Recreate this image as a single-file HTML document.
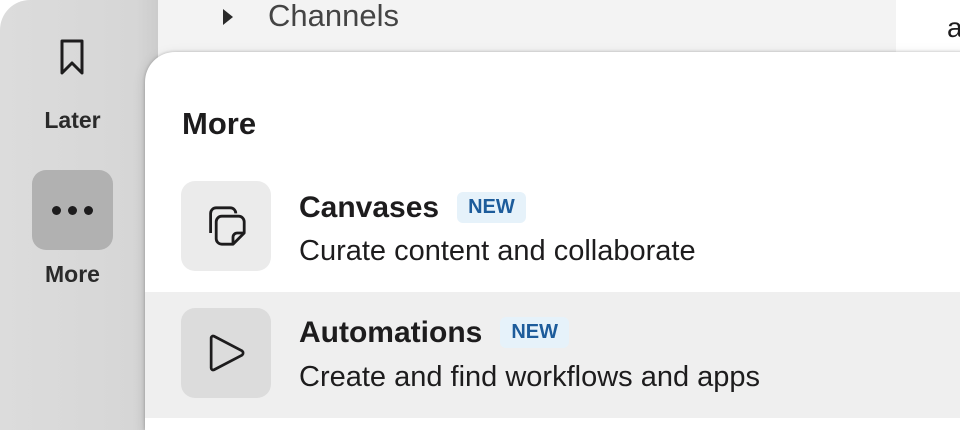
<!DOCTYPE html>
<html><head><style>
*{margin:0;padding:0;box-sizing:border-box}
html,body{width:960px;height:430px;overflow:hidden}
body{background:#fff;font-family:"Liberation Sans",sans-serif;position:relative;color:#1d1c1d}
.side{position:absolute;left:0;top:0;width:160px;height:430px;background:linear-gradient(90deg,#dcdcdc,#d6d6d6 85%,#cbcbcb);border-top-left-radius:30px}
.mid{position:absolute;left:158px;top:0;width:738px;height:60px;background:#f3f3f3}
.pop{position:absolute;left:145px;top:52px;width:850px;height:378px;background:#fff;border-radius:30px 30px 0 0;box-shadow:0 0 3px rgba(0,0,0,.25),0 4px 14px rgba(0,0,0,.12);overflow:hidden}
.row{position:absolute;left:0;width:850px;height:126px}
.ic{position:absolute;left:36px;top:0;width:90px;height:90px;border-radius:14px;display:flex;align-items:center;justify-content:center}
.t{position:absolute;left:154px;font-size:30px;font-weight:bold;color:#1d1c1d}
.s{position:absolute;left:154px;font-size:29px;color:#1d1c1d}
.new{display:inline-block;margin-left:18px;background:#e6f2fa;color:#1d5c9b;font-size:20px;font-weight:bold;padding:4px 11px;border-radius:6px;vertical-align:4px}
</style></head><body>
<div class="side">
 <svg style="position:absolute;left:58px;top:38px" width="28" height="38" viewBox="0 0 28 38"><path d="M4 3h20v32l-10-10l-10 10z" fill="none" stroke="#1d1c1d" stroke-width="3" stroke-linejoin="round"/></svg>
 <div style="position:absolute;left:0;width:145px;top:107px;text-align:center;font-size:23px;font-weight:bold;color:#2a2a2a">Later</div>
 <div style="position:absolute;left:32px;top:170px;width:81px;height:80px;background:#b1b1b1;border-radius:14px;display:flex;align-items:center;justify-content:center;gap:7px">
  <span style="width:9px;height:9px;border-radius:50%;background:#1d1c1d"></span><span style="width:9px;height:9px;border-radius:50%;background:#1d1c1d"></span><span style="width:9px;height:9px;border-radius:50%;background:#1d1c1d"></span></div>
 <div style="position:absolute;left:0;width:145px;top:261px;text-align:center;font-size:23px;font-weight:bold;color:#2a2a2a">More</div>
</div>
<div class="mid">
 <svg style="position:absolute;left:64px;top:8px" width="12" height="18"><path d="M1 1l10 8l-10 8z" fill="#2a2a2a"/></svg>
 <div style="position:absolute;left:110px;top:-2px;font-size:31px;color:#444">Channels</div>
</div>
<div style="position:absolute;left:947px;top:12px;font-size:28px;color:#1d1c1d">a</div>
<div class="pop">
 <div style="position:absolute;left:37px;top:54px;font-size:31px;font-weight:bold">More</div>
 <div class="row" style="top:129px">
  <div class="ic" style="background:#ebebeb"><svg width="56" height="56" viewBox="0 0 40 40" fill="none" stroke="#1d1c1d" stroke-width="2" stroke-linejoin="round"><path d="M9 25V11a4 4 0 0 1 4-4h10a4 4 0 0 1 4 4"/><path d="M17 13h12a4 4 0 0 1 4 4v8l-8 8h-8a4 4 0 0 1-4-4V17a4 4 0 0 1 4-4z"/><path d="M33 25h-5a3 3 0 0 0-3 3v5"/></svg></div>
  <div class="t" style="top:10px">Canvases<span class="new">NEW</span></div>
  <div class="s" style="top:54px">Curate content and collaborate</div>
 </div>
 <div class="row" style="top:240px;background:#efefef;height:126px">
  <div class="ic" style="top:16px;background:#dcdcdc"><svg width="54" height="54" viewBox="0 0 40 40"><path d="M11 7.5l21 11a2 2 0 0 1 0 3l-21 11a1.5 1.5 0 0 1-2-1.4V9a1.5 1.5 0 0 1 2-1.5z" fill="none" stroke="#1d1c1d" stroke-width="2" stroke-linejoin="round"/></svg></div>
  <div class="t" style="top:24px">Automations<span class="new">NEW</span></div>
  <div class="s" style="top:69px">Create and find workflows and apps</div>
 </div>
</div>
</body></html>
